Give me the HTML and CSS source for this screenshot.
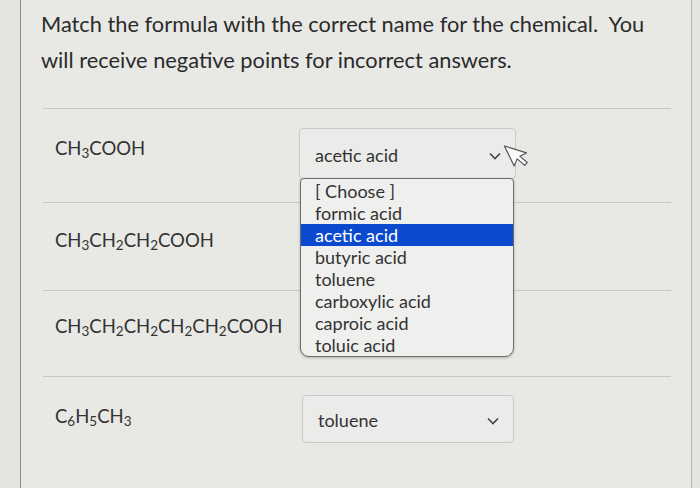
FILE: index.html
```html
<!DOCTYPE html>
<html>
<head>
<meta charset="utf-8">
<link rel="stylesheet" href="styles.css">
</head>
<body>
<div class="card">
  <p class="prompt">Match the formula with the correct name for the chemical.&nbsp; You<br>will receive negative points for incorrect answers.</p>
  <div class="answers">
    <div class="row row1">
      <div class="formula">CH<sub>3</sub>COOH</div>
      <div class="select-wrap">
        <div class="select"><span>acetic acid</span>
          <svg class="chev" width="12" height="8" viewBox="0 0 12 8"><path d="M1 1.5 L6 6.5 L11 1.5" fill="none" stroke="#444" stroke-width="1.6"/></svg>
        </div>
        <svg class="cursor" width="26" height="34" viewBox="0 0 24 32"><path d="M2 2 L2 23 L7.5 18.2 L11.2 26.8 L14.5 25.4 L10.8 17 L17.8 17 Z" fill="#fbfbfb" stroke="#555" stroke-width="1.1" stroke-linejoin="round"/></svg>
        <ul class="dropdown">
          <li>[ Choose ]</li>
          <li>formic acid</li>
          <li class="active">acetic acid</li>
          <li>butyric acid</li>
          <li>toluene</li>
          <li>carboxylic acid</li>
          <li>caproic acid</li>
          <li>toluic acid</li>
        </ul>
      </div>
    </div>
    <div class="row row2">
      <div class="formula">CH<sub>3</sub>CH<sub>2</sub>CH<sub>2</sub>COOH</div>
      <div class="select-wrap"><div class="select hidden"></div></div>
    </div>
    <div class="row row3">
      <div class="formula">CH<sub>3</sub>CH<sub>2</sub>CH<sub>2</sub>CH<sub>2</sub>CH<sub>2</sub>COOH</div>
      <div class="select-wrap"><div class="select hidden"></div></div>
    </div>
    <div class="row row4">
      <div class="formula">C<sub>6</sub>H<sub>5</sub>CH<sub>3</sub></div>
      <div class="select-wrap">
        <div class="select"><span>toluene</span>
          <svg class="chev" width="12" height="8" viewBox="0 0 12 8"><path d="M1 1.5 L6 6.5 L11 1.5" fill="none" stroke="#444" stroke-width="1.6"/></svg>
        </div>
      </div>
    </div>
  </div>
</div>
</body>
</html>
```

FILE: styles.css
```css
html, body {
  margin: 0;
  padding: 0;
  background: #e3e3e0;
  height: 100%;
  overflow: hidden;
}
body {
  font-family: Lato, "Open Sans", sans-serif;
  color: #333;
}
.card {
  margin-left: 20px;
  width: 672px;
  height: 488px;
  border-left: 1px solid #8d8d8b;
  border-right: 1px solid #b5b5b2;
  background: #e8e8e5;
  box-sizing: border-box;
}
.prompt {
  margin: 0;
  padding: 6px 20px 0 20px;
  font-size: 21.8px;
  line-height: 36px;
  color: #2b2b2b;
}
.answers {
  margin: 30px 20px 0 22px;
}
.row {
  display: flex;
  align-items: flex-start;
  border-top: 1px solid #c9c9c6;
  box-sizing: border-box;
}
.row1 { height: 94px; padding-top: 19px; }
.row2 { height: 88px; padding-top: 13px; }
.row3 { height: 86px; padding-top: 13px; }
.row4 { padding-top: 18px; }
.formula {
  width: 256px;
  flex: none;
  box-sizing: border-box;
  padding-left: 12px;
  font-size: 18.5px;
  line-height: 24px;
  color: #333;
  margin-top: 8px;
}
.row2 .formula { margin-top: 12px; }
.row3 .formula { margin-top: 10px; }
.row4 .formula { margin-top: 9px; }
.formula sub {
  font-size: 13.5px;
  vertical-align: -3px;
  line-height: 0;
}
.select-wrap {
  position: relative;
  width: 217px;
  flex: none;
}
.select {
  height: 51px;
  border: 1px solid #c6cacd;
  border-radius: 4px;
  background: #ebebe9;
  display: flex;
  align-items: center;
  justify-content: space-between;
  padding: 2px 14px 0 15px;
  box-sizing: border-box;
  font-size: 18px;
  color: #333;
}
.row4 .select { height: 48px; margin-left: 3px; width: 212px; }
.select.hidden { visibility: hidden; }
.chev { margin-top: 2px; }
.cursor {
  position: absolute;
  left: 203px;
  top: 16px;
  transform: rotate(-26deg);
  transform-origin: 2px 2px;
}
.dropdown {
  position: absolute;
  left: 1px;
  top: 50px;
  width: 214px;
  margin: 0;
  padding: 1px 0 0;
  list-style: none;
  background: #efefed;
  border: 1.5px solid #6d6d6b;
  border-radius: 4px 4px 9px 9px;
  box-sizing: border-box;
  box-shadow: 0 1px 3px rgba(0,0,0,0.25);
  overflow: hidden;
  z-index: 2;
}
.dropdown li {
  height: 22px;
  line-height: 22px;
  font-size: 18px;
  padding-left: 14px;
  color: #333;
}
.dropdown li.active {
  background: #0b49cf;
  color: #fff;
}
```
